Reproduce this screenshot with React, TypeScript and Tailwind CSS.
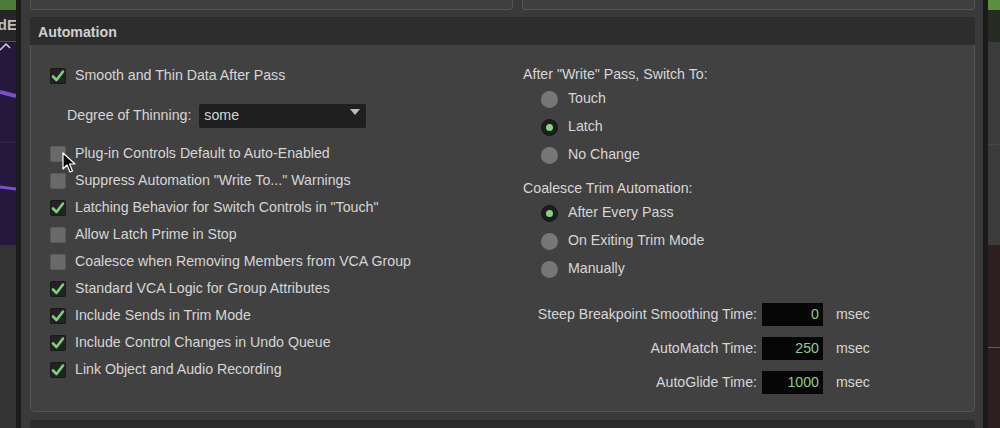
import React from "react";

const Check = ({ on }: { on: boolean }) =>
  on ? (
    <div className="w-[16px] h-[16px] bg-[#232323] border border-[#1a1a1a] rounded-[2px] flex items-center justify-center shrink-0">
      <svg width="14" height="14" viewBox="0 0 14 14">
        <path d="M2 7.5 L5.5 11 L12 2.5" fill="none" stroke="#7fd07b" strokeWidth="2.6" strokeLinecap="round" strokeLinejoin="round" />
      </svg>
    </div>
  ) : (
    <div className="w-[16px] h-[16px] bg-[#696969] border border-[#5c5c5c] rounded-[2px] shrink-0" />
  );

const Radio = ({ on }: { on: boolean }) =>
  on ? (
    <div className="w-[17px] h-[17px] rounded-full bg-[#1d1d1d] border border-[#151515] flex items-center justify-center shrink-0">
      <div className="w-[7px] h-[7px] rounded-full bg-[#86d17f]" />
    </div>
  ) : (
    <div className="w-[17px] h-[17px] rounded-full bg-[#777777] shrink-0" />
  );

const CheckRow = ({ on, label }: { on: boolean; label: string }) => (
  <div className="h-[27px] flex items-center">
    <Check on={on} />
    <span className="ml-[9px]">{label}</span>
  </div>
);

const RadioRow = ({ on, label }: { on: boolean; label: string }) => (
  <div className="h-[28px] flex items-center pl-[18px]">
    <Radio on={on} />
    <span className="ml-[10px]">{label}</span>
  </div>
);

const Field = ({ label, value }: { label: string; value: string }) => (
  <div className="flex items-center">
    <span className="w-[234px] text-right">{label}</span>
    <div className="ml-[5px] w-[61px] h-[23px] bg-[#060606] text-[#8fcc8b] text-right pr-[4px] leading-[23px]">{value}</div>
    <span className="ml-[13px]">msec</span>
  </div>
);

export default function App() {
  return (
    <div
      className="w-[1000px] h-[428px] overflow-hidden flex bg-[#3a3a3a] text-[14.2px] text-[#d6d6d6]"
      style={{ fontFamily: '"Liberation Sans", Arial, sans-serif' }}
    >
      {/* left strip */}
      <div className="w-[16px] flex flex-col shrink-0">
        <div className="h-[10px] bg-[#4f7a37]" />
        <div className="h-[32px] bg-[#262626] text-[#bdbdbd] text-[15px] font-bold flex items-center justify-end overflow-hidden border-b border-[#555]">
          <span className="-mr-[1px]">dE</span>
        </div>
        <div className="h-[203px] bg-[#25183d] relative overflow-hidden">
          <svg width="16" height="203" className="absolute left-0 top-0">
            <path d="M0 8 L6 2 L10 6" stroke="#d8d0e8" strokeWidth="1.5" fill="none" />
            <path d="M0 50 Q8 52 16 54" stroke="#7a4fcf" strokeWidth="4" fill="none" />
            <path d="M0 145 Q8 146 16 147" stroke="#7a4fcf" strokeWidth="3" fill="none" />
            <line x1="0" y1="100" x2="16" y2="100" stroke="#3a2d52" strokeWidth="1" />
          </svg>
        </div>
        <div className="flex-1 bg-[#333333]" />
      </div>
      <div className="w-[5px] bg-[#1c1c1c] shrink-0" />

      {/* main */}
      <div className="flex-1 flex flex-col pl-[9px] pr-[8px]">
        <div className="h-[10px] flex gap-[9px] shrink-0">
          <div className="w-[483px] border-x border-b border-[#555] rounded-b-[4px] bg-[#3f3f3f]" />
          <div className="flex-1 border-x border-b border-[#555] rounded-b-[4px] bg-[#3f3f3f]" />
        </div>
        <div className="mt-[7px] h-[28px] bg-[#2d2d2d] rounded-t-[3px] flex items-center pl-[8px] pt-[3px] font-bold text-[#d0d0d0] shrink-0">
          Automation
        </div>
        <div className="h-[367px] bg-[#414141] border-x border-b border-[#555] rounded-b-[5px] flex shrink-0 relative">
          {/* left column */}
          <div className="w-[492px] pl-[19px] pt-[17px] flex flex-col">
            <CheckRow on={true} label="Smooth and Thin Data After Pass" />
            <div className="h-[40px] flex items-center pl-[17px] pt-[13px]">
              <span>Degree of Thinning:</span>
              <div className="ml-[8px] w-[167px] h-[24px] bg-[#1f1f1f] rounded-[2px] flex items-center justify-between pl-[5px] pr-[6px]">
                <span>some</span>
                <svg width="10" height="7" viewBox="0 0 10 7" className="-mt-[7px]">
                  <path d="M0 0 L10 0 L5 6 Z" fill="#bdbdbd" />
                </svg>
              </div>
            </div>
            <div className="h-[11px]" />
            <CheckRow on={false} label="Plug-in Controls Default to Auto-Enabled" />
            <CheckRow on={false} label={'Suppress Automation "Write To..." Warnings'} />
            <CheckRow on={true} label={'Latching Behavior for Switch Controls in "Touch"'} />
            <CheckRow on={false} label="Allow Latch Prime in Stop" />
            <CheckRow on={false} label="Coalesce when Removing Members from VCA Group" />
            <CheckRow on={true} label="Standard VCA Logic for Group Attributes" />
            <CheckRow on={true} label="Include Sends in Trim Mode" />
            <CheckRow on={true} label="Include Control Changes in Undo Queue" />
            <CheckRow on={true} label="Link Object and Audio Recording" />
          </div>
          {/* right column */}
          <div className="flex-1 pt-[20px] flex flex-col">
            <div className="h-[20px] flex items-center">After "Write" Pass, Switch To:</div>
            <RadioRow on={false} label="Touch" />
            <RadioRow on={true} label="Latch" />
            <RadioRow on={false} label="No Change" />
            <div className="h-[20px] mt-[10px] flex items-center">Coalesce Trim Automation:</div>
            <RadioRow on={true} label="After Every Pass" />
            <RadioRow on={false} label="On Exiting Trim Mode" />
            <RadioRow on={false} label="Manually" />
            <div className="mt-[20px] flex flex-col gap-[11px]">
              <Field label="Steep Breakpoint Smoothing Time:" value="0" />
              <Field label="AutoMatch Time:" value="250" />
              <Field label="AutoGlide Time:" value="1000" />
            </div>
          </div>
          {/* mouse cursor */}
          <svg width="14" height="22" viewBox="0 0 14 22" className="absolute left-[31px] top-[107px]">
            <path d="M1 1 L1 17 L5 13 L8 20 L10.5 19 L7.5 12 L13 12 Z" fill="#000" stroke="#fff" strokeWidth="1.2" strokeLinejoin="round" />
          </svg>
        </div>
        <div className="mt-[8px] flex-1 bg-[#2b2b2b] rounded-t-[3px]" />
      </div>

      {/* right divider and strip */}
      <div className="w-[5px] bg-[#1a1a1a] shrink-0" />
      <div className="w-[12px] flex flex-col shrink-0">
        <div className="h-[10px] bg-[#5e8f3f]" />
        <div className="h-[32px] bg-[#262b22]" />
        <div className="h-[103px] bg-[#3b3b3b] border-b border-[#474747]" />
        <div className="h-[100px] bg-[#3b3b3b]" />
        <div className="h-[103px] bg-[#2d1f1f] border-b border-[#7a5252]" />
        <div className="flex-1 bg-[#2d1f1f]" />
      </div>
    </div>
  );
}
